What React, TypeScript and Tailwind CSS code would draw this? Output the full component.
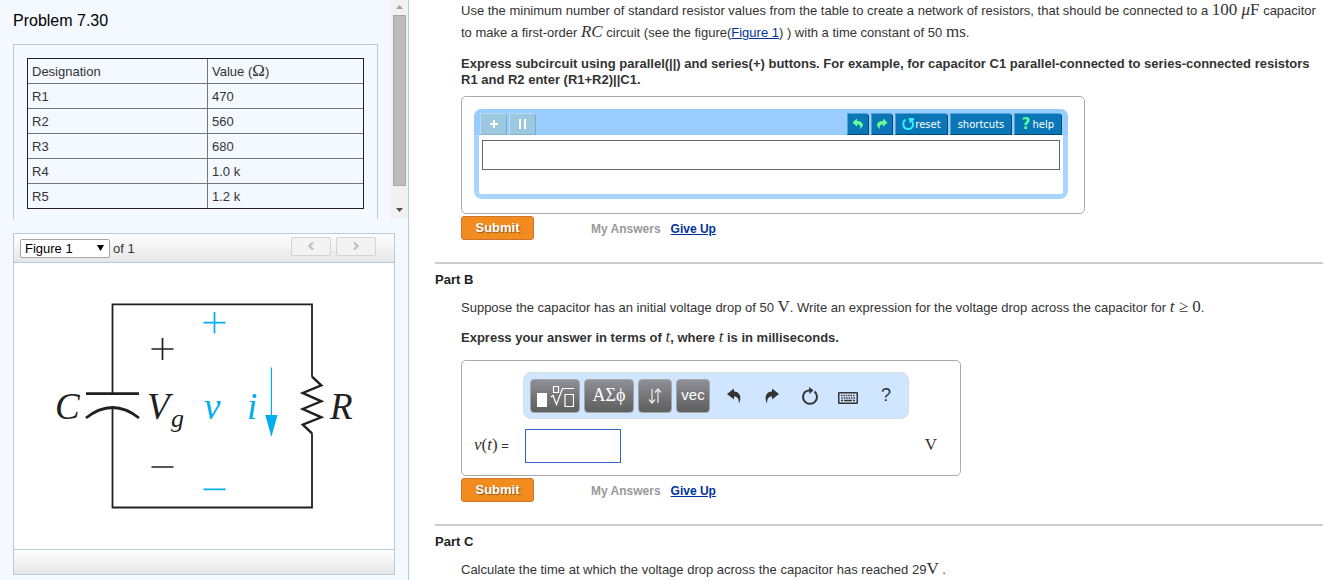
import React, { useState } from 'react';
import clsx from 'clsx';

const resistors = [
  { name: 'R1', value: '470' },
  { name: 'R2', value: '560' },
  { name: 'R3', value: '680' },
  { name: 'R4', value: '1.0 k' },
  { name: 'R5', value: '1.2 k' },
];

interface MathTextProps {
  children: React.ReactNode;
  italic?: boolean;
}

function MathText({ children, italic }: MathTextProps) {
  return (
    <span className={clsx("font-['Liberation_Serif',serif] text-[17px] leading-[0] font-normal", italic && 'italic')}>
      {children}
    </span>
  );
}

function Scrollbar() {
  return (
    <div className="flex w-[17px] shrink-0 flex-col items-center bg-[#f1f1f1]">
      <svg className="h-[15px] w-[17px]" viewBox="0 0 17 15" fill="#a3a3a3">
        <path d="M8.5 5l3.5 4h-7z" />
      </svg>
      <div className="w-[13px] flex-1 border border-[#a8a8a8] bg-[#bcbcbc]" />
      <div className="h-4" />
      <svg className="h-[17px] w-[17px]" viewBox="0 0 17 17" fill="#505050">
        <path d="M5 6h7l-3.500 4z" />
      </svg>
    </div>
  );
}

function ProblemPanel() {
  return (
    <div className="flex h-[219px] overflow-hidden">
      <div className="flex-1 pr-[13px] pl-[13px]">
        <h1 className="pt-[11px] text-[16px] leading-5 text-black">Problem 7.30</h1>
        <div className="mt-[13px] h-[176px] border border-[#b8cbdc] p-[13px]">
          <div className="border border-[#222]">
            <table className="w-full table-fixed border-separate border-spacing-0 text-left">
              <thead>
                <tr className="h-[25px]">
                  <th className="w-[180px] border-r border-b border-[#777] px-1 pt-[2px] pb-0 font-normal">Designation</th>
                  <th className="border-b border-[#777] px-1 pt-[2px] pb-0 font-normal">
                    Value (<MathText>Ω</MathText>)
                  </th>
                </tr>
              </thead>
              <tbody>
                {resistors.map((r, i) => {
                  const last = i === resistors.length - 1;
                  return (
                    <tr key={r.name} className={last ? 'h-6' : 'h-[25px]'}>
                      <td className={clsx('border-r border-[#777] px-1 pt-[2px] pb-0', !last && 'border-b')}>{r.name}</td>
                      <td className={clsx('border-[#777] px-1 pt-[2px] pb-0', !last && 'border-b')}>{r.value}</td>
                    </tr>
                  );
                })}
              </tbody>
            </table>
          </div>
        </div>
      </div>
      <Scrollbar />
    </div>
  );
}

function Circuit() {
  return (
    <svg className="h-[286px] w-full" viewBox="0 0 380 286" fill="none" stroke="#231f20" strokeWidth="1.800">
      <path d="M98.500 131V41.300H298V113.700M298 170.300V244.500H98.500V144.500" />
      {/* capacitor */}
      <path d="M72 130.700H125M72 155Q98.500 134 125 155" strokeWidth="2.800" />
      {/* resistor */}
      <path d="M298 113.700L307.300 122.300L288.800 130L307.300 138.300L288.800 146L307.300 154.300L288.800 161.700L298 170.300" strokeWidth="2.400" />
      <path d="M137.500 86H159.500M148.500 75V97M137.500 204H159.500" strokeWidth="1.700" />
      <g stroke="#00aeef" strokeWidth="1.700">
        <path d="M189.500 59.700H211.500M200.500 49V70.500M189.500 226.300H211.500" />
        <path d="M257.400 104.500V153" strokeWidth="1.200" />
        <path d="M251.300 152H263.500L257.400 174Z" fill="#00aeef" stroke="none" />
      </g>
      <g className="font-['Liberation_Serif',serif] italic" fill="#231f20" stroke="none" fontSize="37">
        <text x="41" y="156">C</text>
        <text x="133" y="156">V</text>
        <text x="157" y="164" fontSize="26">g</text>
        <text x="190" y="156" fill="#00aeef">v</text>
        <text x="233" y="156" fill="#00aeef">i</text>
        <text x="316" y="156">R</text>
      </g>
    </svg>
  );
}

function FigurePanel() {
  const [figure, setFigure] = useState('1');

  return (
    <div className="mx-[13px] mt-[14px] border border-[#b8cbdc] bg-white">
      <div className="flex h-[29px] items-center border-b border-[#b8cbdc] bg-linear-to-b from-white to-[#e6e6e6] pr-[18px] pl-[6px]">
        <label className="flex items-center gap-[3px]">
          <span className="relative">
            <select
              value={figure}
              onChange={(e) => setFigure(e.target.value)}
              aria-label="Figure"
              className="block h-[19px] w-[90px] appearance-none rounded-xs border border-[#a6a6a6] bg-white px-1 pt-[1px] text-[13px] leading-4 text-black"
            >
              <option value="1">Figure 1</option>
            </select>
            <svg className="pointer-events-none absolute top-[6px] right-[6px] h-[6px] w-[7px]" viewBox="0 0 7 6">
              <path d="M0 0h7L3.500 6z" />
            </svg>
          </span>
          <span className="pt-[1px]">of 1</span>
        </label>
        <div className="mb-1 ml-auto flex gap-[5px]">
          <button aria-label="Previous figure" className="flex h-[19px] w-10 items-center justify-center rounded-xs border border-[#d3d3d3] bg-[#f3f3f3]">
            <svg className="h-2 w-2" viewBox="0 0 8 8" fill="none" stroke="#bdbdbd" strokeWidth="2">
              <path d="M6 0.500L2.300 4L6 7.500" />
            </svg>
          </button>
          <button aria-label="Next figure" className="flex h-[19px] w-10 items-center justify-center rounded-xs border border-[#d3d3d3] bg-[#f3f3f3]">
            <svg className="h-2 w-2" viewBox="0 0 8 8" fill="none" stroke="#bdbdbd" strokeWidth="2">
              <path d="M2 0.500L5.700 4L2 7.500" />
            </svg>
          </button>
        </div>
      </div>
      <Circuit />
      <div className="h-[25px] border-t border-[#b8cbdc] bg-linear-to-b from-white to-[#e6e6e6]" />
    </div>
  );
}

interface TabButtonProps {
  label?: string;
  icon?: React.ReactNode;
  title?: string;
  className: string;
}

function TabButton({ label, icon, title, className }: TabButtonProps) {
  return (
    <button
      aria-label={title}
      className={clsx(
        "flex h-[22px] items-center justify-center rounded-tr-sm border border-t-[#4da3d8] border-r-[#034a75] border-b-[#034a75] border-l-[#4da3d8] bg-[#0a76b6] font-['DejaVu_Sans',sans-serif] text-[10px] text-white",
        className
      )}
    >
      {icon}
      {label}
    </button>
  );
}

function SubmitRow() {
  return (
    <div className="mt-[2px] flex items-center">
      <button className="h-6 w-[73px] rounded-[3px] border border-[#cf7430] bg-[#f28c1e] text-[13px] leading-4 font-bold text-white [text-shadow:1px_1px_1px_#8a5a20]">
        Submit
      </button>
      <span className="ml-[57px] pt-[2px] text-[12px] leading-4 font-bold text-[#999]">My Answers</span>
      <a href="#give-up" className="ml-[10px] pt-[2px] text-[12px] leading-4 font-bold text-[#003399] underline">
        Give Up
      </a>
    </div>
  );
}

function CircuitAnswer() {
  const [value, setValue] = useState('');

  return (
    <div className="mt-2 w-[624px] max-w-full rounded-[5px] border border-[#aaa] px-3 pt-3 pb-[14px]">
      <div className="mr-[4px] overflow-hidden rounded-lg bg-[#aad5ff]">
        <div className="flex h-[26px] items-end gap-[2px] bg-[#99ccff] pr-[6px] pl-[6px]">
          <button aria-label="series" className="flex h-[22px] w-[27px] items-center justify-center rounded-tr-sm border border-t-[#b5dcf0] border-r-[#7fa9c4] border-b-[#88b4cd] border-l-[#b5dcf0] bg-[#9cc8e0]">
            <svg className="h-2 w-2" viewBox="0 0 8 8" fill="none" stroke="white" strokeWidth="2">
              <path d="M4 0v8M0 4h8" />
            </svg>
          </button>
          <button aria-label="parallel" className="flex h-[22px] w-[27px] items-center justify-center rounded-tr-sm border border-t-[#b5dcf0] border-r-[#7fa9c4] border-b-[#88b4cd] border-l-[#b5dcf0] bg-[#9cc8e0]">
            <svg className="h-[10px] w-2" viewBox="0 0 8 10" fill="none" stroke="white" strokeWidth="2">
              <path d="M1 0v10M6 0v10" />
            </svg>
          </button>
          <div className="ml-auto flex gap-[2px]">
            <TabButton
              title="undo"
              className="w-[22px]"
              icon={
                <svg className="h-3 w-3" viewBox="0 0 12 12" fill="#66ff99">
                  <path d="M0.500 4.500L5 0.500V3C9 3 11.500 5 10.800 8L8 11.500C9 8.500 8 6.500 5 6.500V8.800Z" />
                </svg>
              }
            />
            <TabButton
              title="redo"
              className="w-[22px]"
              icon={
                <svg className="h-3 w-3" viewBox="0 0 12 12" fill="#66ff99">
                  <path d="M11.500 4.500L7 0.500V3C3 3 0.500 5 1.200 8L4 11.500C3 8.500 4 6.500 7 6.500V8.800Z" />
                </svg>
              }
            />
            <TabButton
              label="reset"
              className="w-[53px]"
              icon={
                <svg className="h-[14px] w-[13px]" viewBox="0 0 13 14" fill="none" stroke="#33eeff" strokeWidth="2">
                  <path d="M3.500 2.500C0 5 0.500 12 6.500 12C11.500 12 12 6 9.500 3" />
                  <path d="M6.500 1H12V2.500L8 6.500Z" fill="#33eeff" stroke="none" />
                </svg>
              }
            />
            <TabButton label="shortcuts" className="w-[62px]" />
            <TabButton
              label="help"
              className="w-[48px] gap-[2px]"
              icon={<span className="text-[15px] leading-4 font-bold text-[#55ff99]">?</span>}
            />
          </div>
        </div>
        <div className="mx-[5px] mb-[5px] h-[59px] rounded-b-xs bg-white px-[3px] pt-[5px]">
          <input
            aria-label="Circuit expression"
            value={value}
            onChange={(e) => setValue(e.target.value)}
            className="block h-[30px] w-full border border-[#666] bg-white px-1 outline-none"
          />
        </div>
      </div>
    </div>
  );
}

const keyClass =
  'flex h-[34px] items-center justify-center rounded-sm border border-[#a5a5a5] bg-linear-to-b from-[#8f8f96] to-[#5e5e5e] text-white';
const toolClass = 'flex h-[34px] w-[38px] items-center justify-center text-[#333]';

function MathToolbar() {
  return (
    <div className="flex h-[47px] w-[386px] items-center rounded-lg border border-[#d8dde4] bg-[#d0e5ff] pl-[6px]">
      <div className="flex gap-1">
        <button aria-label="Templates" className={clsx(keyClass, 'w-[50px]')}>
          <svg className="h-6 w-[38px]" viewBox="0 0 38 24" fill="none" stroke="white" strokeWidth="1.200">
            <path d="M1 9h10v14H1z" fill="white" stroke="none" />
            <path d="M17.500 2.500h5v6h-5zM29 10.500h8.500v12H29zM15 13l2-1.500L20.500 20.500L26.500 4.500H38" />
          </svg>
        </button>
        <button className={clsx(keyClass, "w-[50px] font-['Liberation_Serif',serif] text-[18px]")}>ΑΣϕ</button>
        <button aria-label="Subscript and superscript" className={clsx(keyClass, 'w-[34px]')}>
          <svg className="h-4 w-[14px]" viewBox="0 0 14 16" fill="none" stroke="#eee" strokeWidth="1.200">
            <path d="M4 1v14M1 11.500L4 15L7 11.500M10 15V1M7 4.500L10 1L13 4.500" />
          </svg>
        </button>
        <button className={clsx(keyClass, 'w-[34px] text-[15px]')}>vec</button>
      </div>
      <div className="ml-[5px] flex">
        <button aria-label="Undo" className={toolClass}>
          <svg className="h-4 w-4" viewBox="0 0 16 16" fill="currentColor">
            <path d="M1 6L8 0.500V3.500C14 3.800 16 9 13 15.500C13 11 11.500 8.500 8 8.500V11.500Z" />
          </svg>
        </button>
        <button aria-label="Redo" className={toolClass}>
          <svg className="h-4 w-4" viewBox="0 0 16 16" fill="currentColor">
            <path d="M15 6L8 0.500V3.500C2 3.800 0 9 3 15.500C3 11 4.500 8.500 8 8.500V11.500Z" />
          </svg>
        </button>
        <button aria-label="Reset" className={toolClass}>
          <svg className="h-[18px] w-[18px]" viewBox="0 0 18 18" fill="none" stroke="currentColor" strokeWidth="2">
            <path d="M4.500 4.500A7 7 0 1 0 13.500 4.500M9 3.500C6.500 3.300 5.500 3.800 4 5" />
            <path d="M8 0L12.500 3.300L8.500 7Z" fill="currentColor" stroke="none" />
          </svg>
        </button>
        <button aria-label="Keyboard" className={toolClass}>
          <svg className="mt-1 h-3 w-5" viewBox="0 0 20 12" fill="none" stroke="currentColor">
            <rect x="0.750" y="0.750" width="18.500" height="10.500" rx="0.500" strokeWidth="1.500" />
            <path d="M3 3.500H17M3.500 6H17" strokeWidth="1.300" strokeDasharray="1.400 1" />
            <path d="M3 8.500H5M6 8.500H14M15 8.500H17" strokeWidth="1.300" />
          </svg>
        </button>
        <button aria-label="Help" className={clsx(toolClass, 'text-[18px]')}>?</button>
      </div>
    </div>
  );
}

function VoltageAnswer() {
  const [value, setValue] = useState('');

  return (
    <div className="mt-[14px] h-[116px] w-[500px] max-w-full rounded-[5px] border border-[#aaa] pt-[11px] pl-3">
      <div className="pl-[49px]">
        <MathToolbar />
      </div>
      <div className="mt-[10px] flex items-center">
        <label htmlFor="voltage" className="w-[51px]">
          <MathText italic>v</MathText>
          <MathText>(</MathText>
          <MathText italic>t</MathText>
          <MathText>)</MathText> =
        </label>
        <input
          id="voltage"
          value={value}
          onChange={(e) => setValue(e.target.value)}
          className="h-[34px] w-24 border border-[#3366cc] bg-white px-1 outline-none"
        />
        <span className="mr-[23px] ml-auto">
          <MathText>V</MathText>
        </span>
      </div>
    </div>
  );
}

function PartHeading({ children }: { children: React.ReactNode }) {
  return <h2 className="mt-[22px] border-t-2 border-[#ccc] pt-2 font-bold leading-4 text-[#222]">{children}</h2>;
}

function App() {
  return (
    <div className="flex min-h-screen bg-white font-['Liberation_Sans',Arial,sans-serif] text-[13px] text-[#333]">
      <aside className="w-[409px] shrink-0 border-r border-[#b8cbdc] bg-[#f4f8ff]">
        <ProblemPanel />
        <FigurePanel />
      </aside>

      <main className="min-w-0 flex-1 pr-[13px] pl-[26px]">
        <section className="pl-[26px]">
          <p className="leading-[22px]">
            Use the minimum number of standard resistor values from the table to create a network of resistors, that
            should be connected to a <MathText>100 <i>μ</i>F</MathText> capacitor
            <br />
            to make a first-order <MathText italic>RC</MathText> circuit (see the figure(
            <a href="#figure-1" className="text-[#003399] underline">Figure 1</a>) ) with a time constant of 50{' '}
            <MathText>ms</MathText>.
          </p>
          <p className="mt-3 font-bold leading-4">
            Express subcircuit using parallel(||) and series(+) buttons. For example, for capacitor C1
            parallel-connected to series-connected resistors
            <br />
            R1 and R2 enter (R1+R2)||C1.
          </p>
          <CircuitAnswer />
          <SubmitRow />
        </section>

        <PartHeading>Part B</PartHeading>
        <section className="pl-[26px]">
          <p className="mt-[9px] leading-[22px]">
            Suppose the capacitor has an initial voltage drop of 50 <MathText>V</MathText>. Write an expression for the
            voltage drop across the capacitor for <MathText><i>t</i> ≥ 0</MathText>.
          </p>
          <p className="mt-[11px] font-bold leading-4">
            Express your answer in terms of <MathText italic>t</MathText>, where <MathText italic>t</MathText> is in
            milliseconds.
          </p>
          <VoltageAnswer />
          <SubmitRow />
        </section>

        <PartHeading>Part C</PartHeading>
        <section className="pl-[26px]">
          <p className="mt-[9px] leading-[22px]">
            Calculate the time at which the voltage drop across the capacitor has reached 29<MathText>V</MathText> .
          </p>
        </section>
      </main>
    </div>
  );
}

export default App;
